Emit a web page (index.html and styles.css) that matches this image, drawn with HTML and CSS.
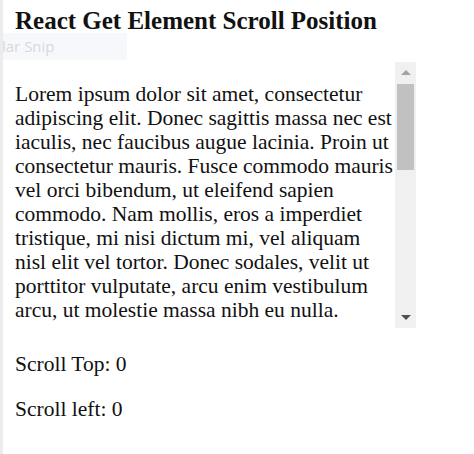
FILE: index.html
```html
<!DOCTYPE html>
<html>
<head>
<meta charset="utf-8">
<link rel="stylesheet" href="styles.css">
</head>
<body>
<div class="page">
  <h3 class="title">React Get Element Scroll Position</h3>
  <div class="snip">lar Snip</div>
  <div class="scroller">
    <div class="content">
      <p>Lorem ipsum dolor sit amet, consectetur adipiscing elit. Donec sagittis massa nec est iaculis, nec faucibus augue lacinia. Proin ut consectetur mauris. Fusce commodo mauris vel orci bibendum, ut eleifend sapien commodo. Nam mollis, eros a imperdiet tristique, mi nisi dictum mi, vel aliquam nisl elit vel tortor. Donec sodales, velit ut porttitor vulputate, arcu enim vestibulum arcu, ut molestie massa nibh eu nulla.</p>
    </div>
    <div class="bar">
      <div class="arrow up"></div>
      <div class="track"><div class="thumb"></div></div>
      <div class="arrow down"></div>
    </div>
  </div>
  <p class="stat">Scroll Top: 0</p>
  <p class="stat">Scroll left: 0</p>
</div>
</body>
</html>
```
FILE: styles.css
```css
html, body {
  margin: 0;
  padding: 0;
  background: #fff;
}
body {
  width: 474px;
  height: 454px;
  overflow: hidden;
  font-family: "Liberation Serif", "Times New Roman", serif;
  color: #111;
}
.page {
  position: relative;
  height: 454px;
  border-left: 3px solid #ececec;
  padding-left: 12px;
  box-sizing: border-box;
}
.title {
  margin: 0;
  padding-top: 7px;
  font-size: 25px;
  line-height: 28px;
  font-weight: bold;
  height: 54px;
  box-sizing: border-box;
  white-space: nowrap;
}
.snip {
  position: absolute;
  left: 0;
  top: 33px;
  width: 124px;
  height: 27px;
  background: #f6f8fb;
  color: #d6d9de;
  font-family: "Open Sans", sans-serif;
  font-size: 15px;
  line-height: 27px;
  text-indent: -1px;
  overflow: hidden;
}
.scroller {
  margin-top: 8px;
  display: flex;
  width: 401px;
  height: 266px;
}
.content {
  flex: 1;
  overflow: hidden;
}
.content p {
  margin: 20px 0 0;
  font-size: 21.5px;
  line-height: 24px;
}
.bar {
  width: 21px;
  background: #f0f0f0;
  display: flex;
  flex-direction: column;
}
.arrow {
  height: 21px;
  display: flex;
  align-items: center;
  justify-content: center;
}
.arrow::before {
  content: "";
  width: 0;
  height: 0;
  border-left: 5px solid transparent;
  border-right: 5px solid transparent;
}
.up::before {
  border-bottom: 5px solid #a3a3a3;
}
.down::before {
  border-top: 5px solid #505050;
}
.track {
  flex: 1;
}
.thumb {
  margin: 1px 2px 0;
  height: 86px;
  background: #c1c1c1;
}
.stat {
  margin: 24px 0 0;
  font-size: 21.5px;
  line-height: 24px;
}
.stat + .stat {
  margin-top: 21px;
}
```
